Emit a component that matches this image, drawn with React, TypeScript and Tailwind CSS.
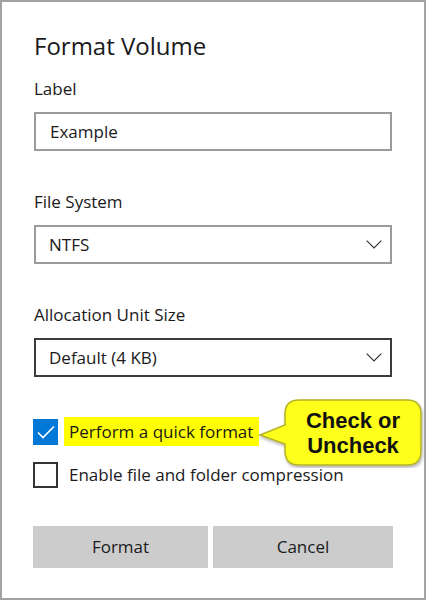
import { useState } from "react";

const font = { fontFamily: '"Segoe UI", "Open Sans", "Liberation Sans", sans-serif' };

function Chevron() {
  return (
    <svg width="16" height="9" viewBox="0 0 16 9" fill="none" className="shrink-0">
      <path d="M0.7 0.7 L8 8 L15.3 0.7" stroke="#333" strokeWidth="1.2" />
    </svg>
  );
}

function Select({ value, focused }: { value: string; focused?: boolean }) {
  return (
    <div
      className={`h-[39px] w-[358px] border-2 flex items-center justify-between pl-[13px] pr-[8px] text-[17px] text-[#1a1a1a] ${
        focused ? "border-[#3c3c3c]" : "border-[#9a9a9a]"
      }`}
    >
      <span>{value}</span>
      <Chevron />
    </div>
  );
}

function Check({ on, toggle }: { on: boolean; toggle: () => void }) {
  return (
    <button
      onClick={toggle}
      className={`w-[25px] h-[26px] shrink-0 flex items-center justify-center ${
        on ? "bg-[#0078d7]" : "border-2 border-[#333]"
      }`}
    >
      {on && (
        <svg width="20" height="16" viewBox="0 0 20 16" fill="none">
          <path d="M2 8.5 L7 13.5 L18 2.5" stroke="#fff" strokeWidth="1.6" />
        </svg>
      )}
    </button>
  );
}

function Callout() {
  return (
    <div className="absolute left-[256px] top-[396px] w-[166px] h-[70px]">
      <svg width="166" height="70" viewBox="0 0 166 70" className="absolute inset-0">
        <defs>
          <filter id="sh" x="-10%" y="-10%" width="130%" height="140%">
            <feDropShadow dx="1" dy="2" stdDeviation="1.5" floodColor="#000" floodOpacity="0.3" />
          </filter>
        </defs>
        <path
          d="M41 2 H149 Q163 2 163 16 V53 Q163 67 149 67 H41 Q27 67 27 53 V46 L2 37 L27 27 V16 Q27 2 41 2 Z"
          fill="#ffff1a"
          stroke="#b3b32a"
          strokeWidth="1.5"
          filter="url(#sh)"
        />
      </svg>
      <div
        className="absolute left-[27px] top-[2px] w-[136px] h-[65px] flex flex-col items-center justify-center text-[22px] leading-[25px] font-bold text-[#111]"
        style={{ fontFamily: '"Liberation Sans", Arial, sans-serif' }}
      >
        <span>Check or</span>
        <span>Uncheck</span>
      </div>
    </div>
  );
}

export default function App() {
  const [quick, setQuick] = useState(true);
  const [compress, setCompress] = useState(false);

  return (
    <div
      className="relative w-[426px] h-[600px] bg-white border-2 border-[#a3a3a3] text-[#1a1a1a] overflow-hidden"
      style={font}
    >
      <div className="pl-[31px] pt-[28px] flex flex-col">
        <h1 className="pl-[1px] text-[24px] leading-[32px] font-normal text-[#1a1a1a]">Format Volume</h1>

        <label className="pl-[1px] mt-[16px] text-[17px] leading-[22px]">Label</label>
        <div className="ml-[1px] mt-[12px] h-[39px] w-[358px] border-2 border-[#9a9a9a] flex items-center pl-[14px] text-[17px]">
          Example
        </div>

        <label className="pl-[1px] mt-[40px] text-[17px] leading-[22px]">File System</label>
        <div className="ml-[1px] mt-[12px]">
          <Select value="NTFS" />
        </div>

        <label className="pl-[1px] mt-[40px] text-[17px] leading-[22px]">Allocation Unit Size</label>
        <div className="ml-[1px] mt-[12px]">
          <Select value="Default (4 KB)" focused />
        </div>

        <div className="mt-[40px] flex items-center gap-[6px]">
          <Check on={quick} toggle={() => setQuick(!quick)} />
          <span className="bg-[#ffff00] h-[29px] pl-[5px] pr-[6px] flex items-center text-[17px]">
            Perform a quick format
          </span>
        </div>

        <div className="mt-[16px] flex items-center gap-[11px]">
          <Check on={compress} toggle={() => setCompress(!compress)} />
          <span className="text-[17px]">Enable file and folder compression</span>
        </div>

        <div className="mt-[38px] flex gap-[5px]">
          <button className="w-[175px] h-[42px] bg-[#cccccc] text-[17px]">Format</button>
          <button className="w-[180px] h-[42px] bg-[#cccccc] text-[17px]">Cancel</button>
        </div>
      </div>
      <Callout />
    </div>
  );
}
